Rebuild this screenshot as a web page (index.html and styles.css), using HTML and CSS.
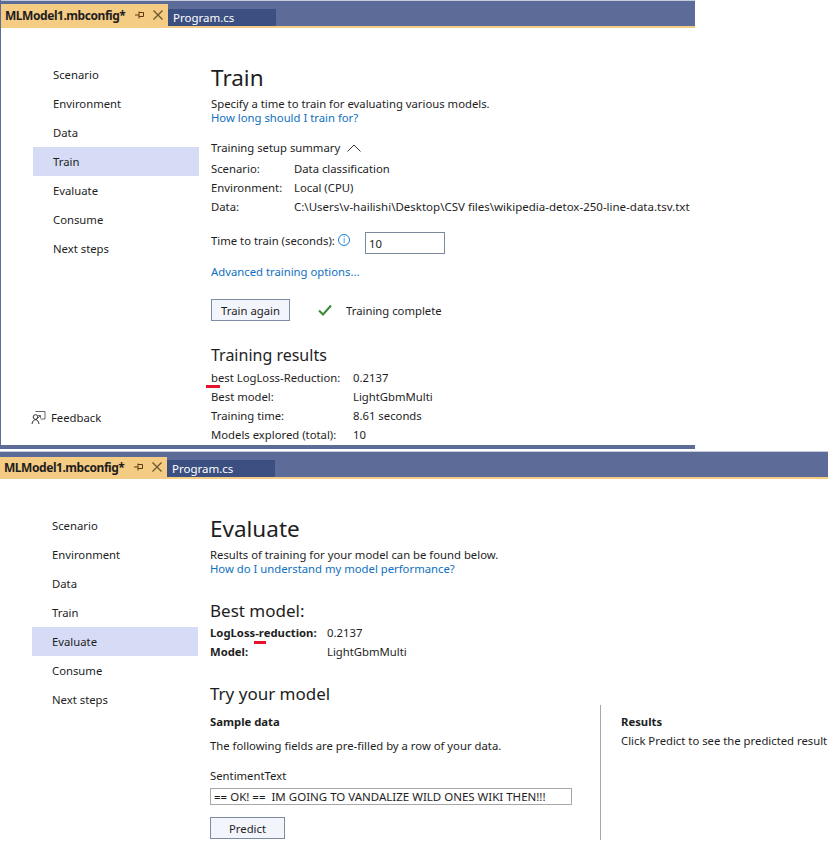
FILE: index.html
```html
<!DOCTYPE html>
<html lang="en">
<head>
    <meta charset="UTF-8">
    <title>MLModel1.mbconfig</title>
    <link rel="stylesheet" href="styles.css">
</head>
<body>
    <section class="panel panel-train">
        <div class="tabstrip">
            <div class="tab-active">
                <span class="tab-name">MLModel1.mbconfig*</span>
                <svg class="tab-pin" width="9" height="8" viewBox="0 0 9 8"><path d="M0 4H4M4 0.500V7.500M4 1.500H8.500V5.500H4" fill="none" stroke="#5c3a10"/></svg>
                <svg class="tab-close" width="10" height="10" viewBox="0 0 10 10"><path d="M0.500 0.500L9.500 9.500M9.500 0.500L0.500 9.500" fill="none" stroke="#6b5530" stroke-width="1.300"/></svg>
            </div>
            <div class="tab">Program.cs</div>
        </div>
        <div class="content">
            <nav class="nav">
                <div class="nav-item">Scenario</div>
                <div class="nav-item">Environment</div>
                <div class="nav-item">Data</div>
                <div class="nav-item selected">Train</div>
                <div class="nav-item">Evaluate</div>
                <div class="nav-item">Consume</div>
                <div class="nav-item">Next steps</div>
                <div class="feedback">
                    <svg width="15" height="15" viewBox="0 0 15 15"><path d="M4.500 1.500H14V9H9.500M3.500 11.500L9.500 5.500M9.500 5.500V8M9.500 5.500H7" fill="none" stroke="#666"/><circle cx="4.500" cy="7" r="2.300" fill="#fff" stroke="#333"/><path d="M1 14C1.500 11 2.800 9.800 4.500 9.800S7.500 11 8 14" fill="#fff" stroke="#333"/></svg>
                    Feedback
                </div>
            </nav>
            <main class="main">
                <h1>Train</h1>
                <p>Specify a time to train for evaluating various models.</p>
                <a class="link link-help">How long should I train for?</a>
                <div class="summary-head">Training setup summary
                    <svg width="16" height="10" viewBox="0 0 16 10"><path d="M1.500 8.500L8 2L14.500 8.500" fill="none" stroke="#333"/></svg>
                </div>
                <div class="row"><span class="key-summary">Scenario:</span>Data classification</div>
                <div class="row"><span class="key-summary">Environment:</span>Local (CPU)</div>
                <div class="row"><span class="key-summary">Data:</span><span class="path">C:\Users\v-hailishi\Desktop\CSV files\wikipedia-detox-250-line-data.tsv.txt</span></div>
                <div class="time-row">
                    <span class="time-label">Time to train (seconds):</span>
                    <span class="info">i</span>
                    <div class="time-input">10</div>
                </div>
                <a class="link advanced">Advanced training options...</a>
                <div class="train-row">
                    <button class="btn">Train again</button>
                    <svg class="check" width="14" height="12" viewBox="0 0 14 12"><path d="M1 6.500L5 10.500L13 1.500" fill="none" stroke="#3a8a3a" stroke-width="2"/></svg>
                    <span>Training complete</span>
                </div>
                <h2 class="results-title">Training results</h2>
                <div class="row results-first"><span class="key-result">best LogLoss-Reduction:</span>0.2137<i class="mark mark-best"></i></div>
                <div class="row"><span class="key-result">Best model:</span>LightGbmMulti</div>
                <div class="row"><span class="key-result">Training time:</span>8.61 seconds</div>
                <div class="row"><span class="key-result">Models explored (total):</span>10</div>
            </main>
        </div>
    </section>

    <section class="panel panel-evaluate">
        <div class="tabstrip">
            <div class="tab-active">
                <span class="tab-name">MLModel1.mbconfig*</span>
                <svg class="tab-pin" width="9" height="8" viewBox="0 0 9 8"><path d="M0 4H4M4 0.500V7.500M4 1.500H8.500V5.500H4" fill="none" stroke="#5c3a10"/></svg>
                <svg class="tab-close" width="10" height="10" viewBox="0 0 10 10"><path d="M0.500 0.500L9.500 9.500M9.500 0.500L0.500 9.500" fill="none" stroke="#6b5530" stroke-width="1.300"/></svg>
            </div>
            <div class="tab">Program.cs</div>
        </div>
        <div class="content">
            <nav class="nav">
                <div class="nav-item">Scenario</div>
                <div class="nav-item">Environment</div>
                <div class="nav-item">Data</div>
                <div class="nav-item">Train</div>
                <div class="nav-item selected">Evaluate</div>
                <div class="nav-item">Consume</div>
                <div class="nav-item">Next steps</div>
            </nav>
            <main class="main">
                <h1>Evaluate</h1>
                <p>Results of training for your model can be found below.</p>
                <a class="link link-performance">How do I understand my model performance?</a>
                <h2 class="best-title">Best model:</h2>
                <div class="row"><b class="key-best">LogLoss-reduction:</b>0.2137<i class="mark mark-reduction"></i></div>
                <div class="row"><b class="key-best">Model:</b>LightGbmMulti</div>
                <h2 class="try-title">Try your model</h2>
                <div class="try">
                    <div class="sample">
                        <b class="try-head">Sample data</b>
                        <p class="prefilled">The following fields are pre-filled by a row of your data.</p>
                        <div class="field-label">SentimentText</div>
                        <div class="text-input">== OK! ==&nbsp; IM GOING TO VANDALIZE WILD ONES WIKI THEN!!!</div>
                        <button class="btn btn-predict">Predict</button>
                    </div>
                    <div class="results">
                        <b class="try-head">Results</b>
                        <p>Click Predict to see the predicted result</p>
                    </div>
                </div>
            </main>
        </div>
    </section>
</body>
</html>
```

FILE: styles.css
```css
html, body {
    margin: 0;
    padding: 0;
}
body {
    width: 828px;
    height: 854px;
    overflow: hidden;
    background: white;
    color: #1e1e1e;
    font-family: "Noto Sans", "Open Sans", sans-serif;
    font-size: 11.3px;
    line-height: 19px;
}
.panel {
    position: relative;
    overflow: hidden;
}
.panel-train {
    width: 695px;
    height: 449px;
    box-sizing: border-box;
    border-left: 1px solid #5d6b99;
    border-bottom: 4px solid #5d6b99;
}
.panel-evaluate {
    margin-top: 2px;
    height: 403px;
}
.tabstrip {
    display: flex;
    align-items: flex-end;
    height: 25px;
    background: #5d6b99;
    border-top: 1px solid #c5cbdd;
    border-bottom: 2px solid #f5cc84;
}
.panel-train .tabstrip {
    margin-left: -1px;
}
.tab-active {
    display: flex;
    align-items: center;
    width: 163px;
    height: 22px;
    padding-left: 5px;
    background: #f5cc84;
    font-weight: 700;
    font-size: 12px;
    letter-spacing: -0.45px;
}
.panel-evaluate .tab-active {
    height: 20px;
    padding-left: 4px;
}
.tab-name {
    width: 130px;
}
.tab-pin {
    margin-right: 9px;
}
.tab {
    width: 103px;
    height: 17px;
    padding-left: 5px;
    background: #3b4f81;
    color: white;
    font-size: 11.5px;
    line-height: 17px;
}
.content {
    display: flex;
}
.nav {
    position: relative;
    width: 166px;
    height: 390px;
    margin-left: 32px;
    padding-top: 32px;
    flex-shrink: 0;
}
.nav-item {
    height: 29px;
    padding-left: 20px;
    line-height: 29px;
}
.nav-item.selected {
    background: #d6dcf5;
}
.feedback {
    position: absolute;
    left: -2px;
    top: 380px;
    display: flex;
    align-items: center;
    gap: 5px;
}
.main {
    position: relative;
    margin-left: 12px;
    padding-top: 34px;
    flex-grow: 1;
}
h1 {
    margin: 0;
    font-size: 22.5px;
    font-weight: 400;
    line-height: 32px;
}
h2 {
    margin: 0;
    font-size: 17px;
    font-weight: 400;
    line-height: 24px;
}
p {
    margin: 0;
}
.link {
    display: block;
    color: #0e70c0;
}
.link-help {
    margin-top: -5px;
}
.link-performance {
    margin-top: -5px;
}
.summary-head {
    display: flex;
    align-items: center;
    gap: 6px;
    margin-top: 11px;
    margin-bottom: 2px;
}
.row {
    position: relative;
    display: flex;
}
.key-summary {
    width: 83px;
}
.path {
    font-size: 11.5px;
}
.time-row {
    display: flex;
    align-items: flex-start;
    height: 22px;
    margin-top: 16px;
}
.time-label {
    width: 127px;
    margin-top: -1px;
}
.info {
    box-sizing: border-box;
    width: 12px;
    height: 12px;
    margin-top: 2px;
    border: 1px solid #1c7cd5;
    border-radius: 50%;
    color: #1c7cd5;
    font-size: 8px;
    line-height: 10px;
    text-align: center;
}
.time-input {
    width: 75px;
    height: 20px;
    margin-left: 15px;
    padding-left: 3px;
    border: 1px solid #7a8a9c;
    line-height: 21px;
}
.advanced {
    margin-top: 8px;
}
.train-row {
    display: flex;
    align-items: center;
    margin-top: 18px;
    height: 22px;
}
.btn {
    width: 79px;
    height: 22px;
    padding: 0;
    border: 1px solid #7d8ba5;
    background: #f2f5fc;
    color: #1e1e1e;
    font: inherit;
}
.check {
    margin-left: 28px;
    margin-right: 14px;
}
.results-title {
    margin-top: 22px;
    font-size: 16px;
}
.results-first {
    margin-top: 1px;
}
.key-result {
    width: 142px;
}
.mark {
    position: absolute;
    height: 3px;
    background: #e8112d;
}
.mark-best {
    left: -5px;
    top: 17px;
    width: 14px;
}
.mark-reduction {
    left: 44px;
    top: 18px;
    width: 12px;
}
.best-title {
    margin-top: 21px;
}
.key-best {
    width: 117px;
}
.try-title {
    margin-top: 21px;
}
.try {
    display: flex;
    height: 135px;
    margin-top: -1px;
}
.sample {
    box-sizing: border-box;
    width: 391px;
    padding-top: 7px;
    border-right: 1px solid #a8a8a8;
}
.results {
    padding-top: 7px;
    padding-left: 20px;
    white-space: nowrap;
}
.try-head {
    display: block;
}
.prefilled {
    margin-top: 5px;
}
.field-label {
    margin-top: 11px;
}
.text-input {
    width: 357px;
    height: 15px;
    margin-top: 3px;
    padding-left: 3px;
    border: 1px solid #a8a8a8;
    font-size: 11.5px;
    line-height: 15px;
}
.btn-predict {
    display: block;
    width: 75px;
    margin-top: 12px;
}
```
